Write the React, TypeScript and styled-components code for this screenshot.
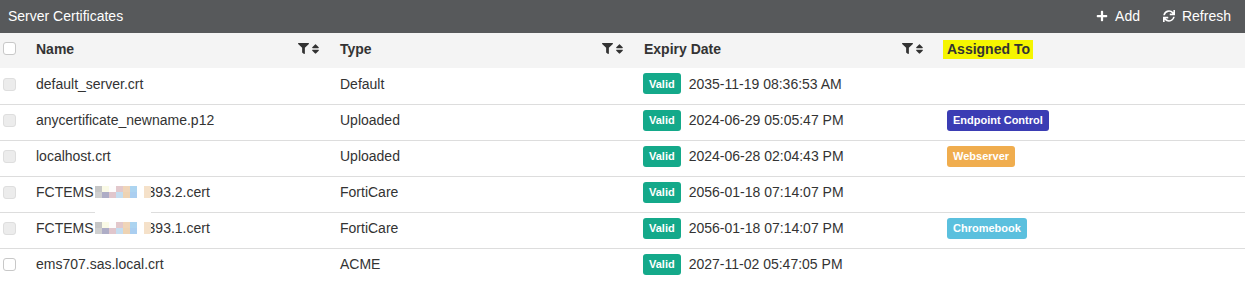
import React from "react";
import styled, { createGlobalStyle } from "styled-components";
import { FaFilter, FaSort, FaPlus, FaSync } from "react-icons/fa";

const Global = createGlobalStyle`
  html, body { margin: 0; padding: 0; background: #fff; }
  body { font-family: "Liberation Sans", Arial, sans-serif; font-size: 14px; color: #333; }
`;

const Panel = styled.div`
  width: 1245px;
  display: flex;
  flex-direction: column;
`;

const TitleBar = styled.div`
  height: 33px;
  background: #57595b;
  color: #fff;
  display: flex;
  align-items: center;
  justify-content: space-between;
  padding: 0 14px 2px 8px;
  box-sizing: border-box;
`;

const Title = styled.span`
  font-size: 14px;
`;

const Actions = styled.div`
  display: flex;
  align-items: center;
  gap: 23px;
`;

const ActionButton = styled.span`
  display: inline-flex;
  align-items: center;
  gap: 7px;
  font-size: 14px;
  color: #fff;
  svg { width: 12px; height: 12px; }
`;

const Table = styled.table`
  width: 1245px;
  border-collapse: collapse;
  table-layout: fixed;
`;

const HeadRow = styled.tr`
  background: #f4f4f4;
  height: 35px;
`;

const Th = styled.th<{ $w?: number }>`
  ${(p) => (p.$w ? `width: ${p.$w}px;` : "")}
  text-align: left;
  font-weight: bold;
  font-size: 14px;
  padding: 0 10px 4px;
  box-sizing: border-box;
`;

const CheckCell = styled.td`
  width: 26px;
  padding: 0 0 3px 3px;
  box-sizing: border-box;
`;

const CheckTh = styled.th`
  width: 26px;
  padding: 0 0 4px 3px;
  box-sizing: border-box;
  text-align: left;
`;

const HeadInner = styled.div`
  display: flex;
  align-items: center;
  justify-content: space-between;
`;

const Icons = styled.span`
  display: inline-flex;
  align-items: center;
  gap: 2px;
  color: #333;
  svg:first-child { width: 11px; height: 11px; }
  svg:last-child { width: 9px; height: 12px; }
`;

const Highlight = styled.span`
  background: #f5f500;
  padding: 1px 3px 2px 4px;
  margin-left: -1px;
`;

const Box = styled.span<{ $muted?: boolean }>`
  display: block;
  width: 13px;
  height: 13px;
  box-sizing: border-box;
  border-radius: 3px;
  border: 1px solid ${(p) => (p.$muted ? "#dedede" : "#c8c8c8")};
  background: ${(p) => (p.$muted ? "#ececec" : "#fff")};
`;

const Row = styled.tr<{ $last?: boolean }>`
  height: 36px;
  border-bottom: ${(p) => (p.$last ? "none" : "1px solid #dddddd")};
`;

const Td = styled.td`
  padding: 0 10px 4px;
  font-size: 14px;
  white-space: nowrap;
  overflow: visible;
  box-sizing: border-box;
`;

const DateCell = styled.div`
  display: flex;
  align-items: center;
  gap: 8px;
  margin-left: -1px;
`;

const Badge = styled.span<{ $bg: string }>`
  display: inline-flex;
  align-items: center;
  height: 21px;
  padding: 0 6px;
  border-radius: 3px;
  background: ${(p) => p.$bg};
  color: #fff;
  font-weight: bold;
  font-size: 11px;
`;

const AssignBadge = styled(Badge)`
  margin-left: 3px;
`;

const NameText = styled.span`
  position: relative;
`;

const Mosaic = styled.span<{ $bleed?: boolean }>`
  position: relative;
  display: inline-grid;
  grid-template-columns: repeat(8, 7px);
  grid-template-rows: 6px 6px;
  vertical-align: middle;
  margin: 0 -3px 0 1px;
  top: -1px;
  ${(p) =>
    p.$bleed
      ? `&::after { content: ""; position: absolute; left: 0; right: 0; top: 12px; height: 18px; background: #fff; }`
      : ""}
`;

const Cell = styled.span<{ $c: string }>`
  background: ${(p) => p.$c};
`;

const mosaicColors = [
  "#c6c6c6", "#fafae6", "#fdfdfd", "#e2c8cc", "#f0d5b8", "#acd4f0", "#ffffff", "#f5e1c9",
  "#cfcfcf", "#aeadc6", "#e0c6cc", "#c4ddf0", "#eed3b3", "#aacef0", "#ffffff", "#f5e1c9",
];

const Redacted: React.FC<{ bleed?: boolean }> = ({ bleed }) => (
  <Mosaic $bleed={bleed}>
    {mosaicColors.map((c, i) => (
      <Cell key={i} $c={c} />
    ))}
  </Mosaic>
);

type Item = {
  name: React.ReactNode;
  type: string;
  date: string;
  assign?: { label: string; bg: string };
  muted: boolean;
};

const rows: Item[] = [
  { name: "default_server.crt", type: "Default", date: "2035-11-19 08:36:53 AM", muted: true },
  {
    name: "anycertificate_newname.p12",
    type: "Uploaded",
    date: "2024-06-29 05:05:47 PM",
    assign: { label: "Endpoint Control", bg: "#3b3db4" },
    muted: true,
  },
  {
    name: "localhost.crt",
    type: "Uploaded",
    date: "2024-06-28 02:04:43 PM",
    assign: { label: "Webserver", bg: "#f0ad4e" },
    muted: true,
  },
  {
    name: (
      <NameText>
        FCTEMS<Redacted bleed />393.2.cert
      </NameText>
    ),
    type: "FortiCare",
    date: "2056-01-18 07:14:07 PM",
    muted: true,
  },
  {
    name: (
      <NameText>
        FCTEMS<Redacted />393.1.cert
      </NameText>
    ),
    type: "FortiCare",
    date: "2056-01-18 07:14:07 PM",
    assign: { label: "Chromebook", bg: "#5bc0de" },
    muted: true,
  },
  { name: "ems707.sas.local.crt", type: "ACME", date: "2027-11-02 05:47:05 PM", muted: false },
];

const HeadIcons = () => (
  <Icons>
    <FaFilter />
    <FaSort />
  </Icons>
);

export default function App() {
  return (
    <Panel>
      <Global />
      <TitleBar>
        <Title>Server Certificates</Title>
        <Actions>
          <ActionButton>
            <FaPlus />
            Add
          </ActionButton>
          <ActionButton>
            <FaSync />
            Refresh
          </ActionButton>
        </Actions>
      </TitleBar>
      <Table>
        <thead>
          <HeadRow>
            <CheckTh>
              <Box />
            </CheckTh>
            <Th $w={304}>
              <HeadInner>
                Name
                <HeadIcons />
              </HeadInner>
            </Th>
            <Th $w={304}>
              <HeadInner>
                Type
                <HeadIcons />
              </HeadInner>
            </Th>
            <Th $w={300}>
              <HeadInner>
                Expiry Date
                <HeadIcons />
              </HeadInner>
            </Th>
            <Th>
              <Highlight>Assigned To</Highlight>
            </Th>
          </HeadRow>
        </thead>
        <tbody>
          {rows.map((r, i) => (
            <Row key={i} $last={i === rows.length - 1}>
              <CheckCell>
                <Box $muted={r.muted} />
              </CheckCell>
              <Td>{r.name}</Td>
              <Td>{r.type}</Td>
              <Td>
                <DateCell>
                  <Badge $bg="#14a98a">Valid</Badge>
                  {r.date}
                </DateCell>
              </Td>
              <Td>{r.assign && <AssignBadge $bg={r.assign.bg}>{r.assign.label}</AssignBadge>}</Td>
            </Row>
          ))}
        </tbody>
      </Table>
    </Panel>
  );
}
